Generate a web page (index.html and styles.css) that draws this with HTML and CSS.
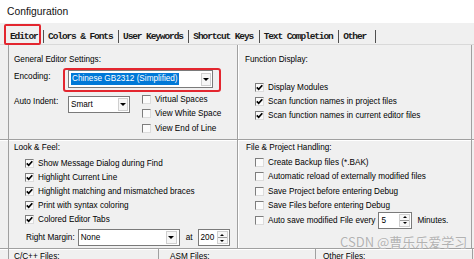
FILE: index.html
```html
<!DOCTYPE html>
<html>
<head>
<meta charset="utf-8">
<title>Configuration</title>
<link rel="stylesheet" href="styles.css">
</head>
<body>
<div class="title">Configuration</div>
<div class="tabs">
  <span class="tab active">Editor</span><span class="tab">Colors &amp; Fonts</span><span class="tab">User Keywords</span><span class="tab">Shortcut Keys</span><span class="tab">Text Completion</span><span class="tab last">Other</span>
</div>
<div class="page">
  <div class="row r1">
    <div class="grp gl">
      <div class="head">General Editor Settings:</div>
      <div class="field enc">
        <span class="lbl">Encoding:</span>
        <div class="combo c-enc"><span class="sel">Chinese GB2312 (Simplified)</span><span class="drop"></span></div>
      </div>
      <div class="indent-row">
        <div class="field ind">
          <span class="lbl">Auto Indent:</span>
          <div class="combo c-ind"><span class="val">Smart</span><span class="drop"></span></div>
        </div>
        <div class="checks c-left">
          <div class="chk"><span class="box"></span>Virtual Spaces</div>
          <div class="chk"><span class="box"></span>View White Space</div>
          <div class="chk"><span class="box"></span>View End of Line</div>
        </div>
      </div>
    </div>
    <div class="grp gr">
      <div class="head">Function Display:</div>
      <div class="checks c-fd">
        <div class="chk"><span class="box on"><svg viewBox="0 0 7 7" width="7" height="7"><path d="M0.8 3.3 L2.7 5.3 L6.3 1.2" fill="none" stroke="#000" stroke-width="1.7"/></svg></span>Display Modules</div>
        <div class="chk"><span class="box on"><svg viewBox="0 0 7 7" width="7" height="7"><path d="M0.8 3.3 L2.7 5.3 L6.3 1.2" fill="none" stroke="#000" stroke-width="1.7"/></svg></span>Scan function names in project files</div>
        <div class="chk"><span class="box on"><svg viewBox="0 0 7 7" width="7" height="7"><path d="M0.8 3.3 L2.7 5.3 L6.3 1.2" fill="none" stroke="#000" stroke-width="1.7"/></svg></span>Scan function names in current editor files</div>
      </div>
    </div>
  </div>
  <div class="row r2">
    <div class="grp gl gl2">
      <div class="head">Look &amp; Feel:</div>
      <div class="checks c-lf">
        <div class="chk"><span class="box on"><svg viewBox="0 0 7 7" width="7" height="7"><path d="M0.8 3.3 L2.7 5.3 L6.3 1.2" fill="none" stroke="#000" stroke-width="1.7"/></svg></span>Show Message Dialog during Find</div>
        <div class="chk"><span class="box on"><svg viewBox="0 0 7 7" width="7" height="7"><path d="M0.8 3.3 L2.7 5.3 L6.3 1.2" fill="none" stroke="#000" stroke-width="1.7"/></svg></span>Highlight Current Line</div>
        <div class="chk"><span class="box on"><svg viewBox="0 0 7 7" width="7" height="7"><path d="M0.8 3.3 L2.7 5.3 L6.3 1.2" fill="none" stroke="#000" stroke-width="1.7"/></svg></span>Highlight matching and mismatched braces</div>
        <div class="chk"><span class="box on"><svg viewBox="0 0 7 7" width="7" height="7"><path d="M0.8 3.3 L2.7 5.3 L6.3 1.2" fill="none" stroke="#000" stroke-width="1.7"/></svg></span>Print with syntax coloring</div>
        <div class="chk"><span class="box on"><svg viewBox="0 0 7 7" width="7" height="7"><path d="M0.8 3.3 L2.7 5.3 L6.3 1.2" fill="none" stroke="#000" stroke-width="1.7"/></svg></span>Colored Editor Tabs</div>
      </div>
      <div class="margin-row">
        <span>Right Margin:</span>
        <div class="combo c-rm"><span class="val">None</span><span class="drop"></span></div>
        <span class="at">at</span>
        <div class="spin s200"><span class="v">200</span><span class="arr"><span class="up"></span><span class="dn"></span></span></div>
      </div>
    </div>
    <div class="grp gr gr2">
      <div class="head">File &amp; Project Handling:</div>
      <div class="checks c-fp">
        <div class="chk"><span class="box"></span>Create Backup files (*.BAK)</div>
        <div class="chk"><span class="box"></span>Automatic reload of externally modified files</div>
        <div class="chk"><span class="box"></span>Save Project before entering Debug</div>
        <div class="chk"><span class="box"></span>Save Files before entering Debug</div>
        <div class="chk"><span class="box"></span>Auto save modified File every<div class="spin s5"><span class="v">5</span><span class="arr"><span class="up"></span><span class="dn"></span></span></div><span class="min">Minutes.</span></div>
      </div>
    </div>
  </div>
  <div class="row r3">
    <div class="cell c1">C/C++ Files:</div>
    <div class="cell c2">ASM Files:</div>
    <div class="cell c3">Other Files:</div>
  </div>
</div>
<div class="watermark">CSDN @曹乐乐爱学习</div>
</body>
</html>
```

FILE: styles.css
```css
html, body {
  margin: 0;
  padding: 0;
}
body {
  width: 474px;
  height: 259px;
  overflow: hidden;
  position: relative;
  background: #f0f0f0;
  font-family: "Liberation Sans", Arial, sans-serif;
  font-size: 8.2px;
  color: #000;
}

.title {
  background: #fff;
  height: 23px;
  line-height: 23px;
  padding-left: 7px;
  font-size: 10.3px;
  color: #111;
}

.tabs {
  height: 21px;
  display: flex;
  align-items: flex-start;
  padding-left: 6px;
  font-family: "Liberation Mono", "Courier New", monospace;
  font-weight: bold;
  font-size: 9.5px;
  letter-spacing: -1.1px;
  color: #1a1a1a;
}
.tab {
  position: relative;
  margin-top: 7px;
  height: 13px;
  line-height: 13px;
  padding: 0 5.5px 0 4px;
  border-right: 1px solid #505050;
  white-space: pre;
}
.tab.last {
  padding-right: 9px;
}
.tab.active::after {
  content: "";
  position: absolute;
  left: -2px;
  top: -6px;
  width: 33px;
  height: 17px;
  border: 2px solid #e3262f;
  border-radius: 2px;
}

.page {
  border-top: 1px solid #d9d9d9;
}
.row {
  display: flex;
  border-bottom: 1px solid #a0a0a0;
  box-shadow: 0 1px 0 #fff;
}
.r1 { height: 94px; }
.r2 { height: 108px; }
.r3 {
  height: 12px;
  border-bottom: none;
  box-shadow: none;
}

.grp.gl {
  margin-left: 8px;
  width: 228px;
  border-left: 1px solid #a0a0a0;
  border-right: 1px solid #a0a0a0;
}
.grp.gr {
  width: 233px;
  border-right: 1px solid #a0a0a0;
  box-shadow: inset 1px 0 0 #fff;
}

.head {
  line-height: 12px;
  white-space: nowrap;
}
.gl .head { padding: 9px 0 0 5px; }
.gr .head { padding: 9px 0 0 7px; }
.gl2 .head { padding: 2px 0 0 5px; }
.gr2 .head { padding: 2px 0 0 8px; }

.field {
  display: flex;
  align-items: flex-start;
}
.lbl {
  width: 54px;
  line-height: 14px;
  white-space: nowrap;
}
.enc {
  margin: 4px 0 0 5px;
}

.combo {
  position: relative;
  display: flex;
  align-items: center;
  box-sizing: border-box;
  background: #fff;
  border: 1px solid #7a7a7a;
  white-space: nowrap;
}
.c-enc {
  width: 145px;
  height: 18px;
}
.c-enc::after {
  content: "";
  position: absolute;
  left: -6px;
  top: -3px;
  right: -9px;
  bottom: -5px;
  border: 2px solid #e3262f;
  border-radius: 3px;
}
.sel {
  margin-left: 2px;
  padding: 0 1px;
  line-height: 12px;
  background: #0078d7;
  color: #fff;
}
.val {
  margin-left: 2px;
}
.drop {
  margin-left: auto;
  margin-right: 1px;
  width: 10px;
  height: 13px;
  box-sizing: border-box;
  border: 1px solid #cfcfcf;
  background: #f6f6f6;
  display: flex;
  align-items: center;
  justify-content: center;
}
.drop::after {
  content: "";
  width: 0;
  height: 0;
  border-left: 3px solid transparent;
  border-right: 3px solid transparent;
  border-top: 3px solid #000;
}

.indent-row {
  display: flex;
  margin: 4px 0 0 5px;
}
.ind .lbl { margin-top: 3px; }
.c-ind {
  margin-top: 4px;
  width: 62px;
  height: 17px;
}

.checks { display: flex; flex-direction: column; }
.chk {
  display: flex;
  align-items: center;
  height: 14px;
  white-space: nowrap;
}
.box {
  flex: none;
  width: 9px;
  height: 9px;
  box-sizing: border-box;
  margin-right: 4px;
  border: 1px solid;
  border-color: #7d7d7d #dcdcdc #dcdcdc #7d7d7d;
  background: #fbfbfb;
  display: flex;
  align-items: center;
  justify-content: center;
}
.box svg { display: block; }

.c-left { margin-left: 12px; }
.c-left .chk { height: 14.5px; }
.c-fd { margin-top: 14px; padding-left: 17px; }
.c-lf { margin-top: 2px; padding-left: 16px; }
.c-fp { margin-top: 1px; padding-left: 17px; }
.c-fp .chk { height: 14.5px; }

.margin-row {
  display: flex;
  align-items: center;
  height: 17px;
  margin: 3px 0 0 17px;
  white-space: nowrap;
}
.c-rm {
  margin-left: 3px;
  width: 102px;
  height: 17px;
}
.c-rm .drop {
  width: 11px;
  margin-right: 2px;
}
.at { margin-left: 6px; }

.spin {
  display: flex;
  align-items: center;
  box-sizing: border-box;
  height: 17px;
  border: 1px solid #7a7a7a;
  background: #fff;
}
.s200 { margin-left: 5px; width: 32px; }
.s5 { margin-left: 3px; width: 34px; }
.spin .v { margin-left: 2px; }
.spin .arr {
  margin-left: auto;
  margin-right: 1px;
  width: 11px;
  height: 13px;
  display: flex;
  flex-direction: column;
  box-sizing: border-box;
  border: 1px solid #cfcfcf;
  background: #f6f6f6;
}
.spin .up, .spin .dn {
  flex: 1;
  display: flex;
  align-items: center;
  justify-content: center;
}
.spin .up { border-bottom: 1px solid #9a9a9a; }
.spin .up::after {
  content: "";
  border-left: 2px solid transparent;
  border-right: 2px solid transparent;
  border-bottom: 2px solid #000;
}
.spin .dn::after {
  content: "";
  border-left: 2px solid transparent;
  border-right: 2px solid transparent;
  border-top: 2px solid #000;
}
.min { margin-left: 5px; }

.cell {
  line-height: 12px;
  padding-top: 2px;
  white-space: nowrap;
  box-sizing: border-box;
}
.c1 {
  margin-left: 8px;
  width: 151px;
  padding-left: 5px;
  border-left: 1px solid #a0a0a0;
  border-right: 1px solid #a0a0a0;
}
.c2 {
  width: 157px;
  padding-left: 11px;
  border-right: 1px solid #a0a0a0;
}
.c3 {
  width: 157px;
  padding-left: 7px;
  border-right: 1px solid #a0a0a0;
}

.watermark {
  position: absolute;
  left: 340px;
  top: 234px;
  font-family: "Noto Sans CJK SC", "Noto Sans", sans-serif;
  font-size: 13px;
  line-height: 16px;
  color: #b2b2b2;
  text-shadow: 0 0 1px #fff;
  white-space: nowrap;
}
```
